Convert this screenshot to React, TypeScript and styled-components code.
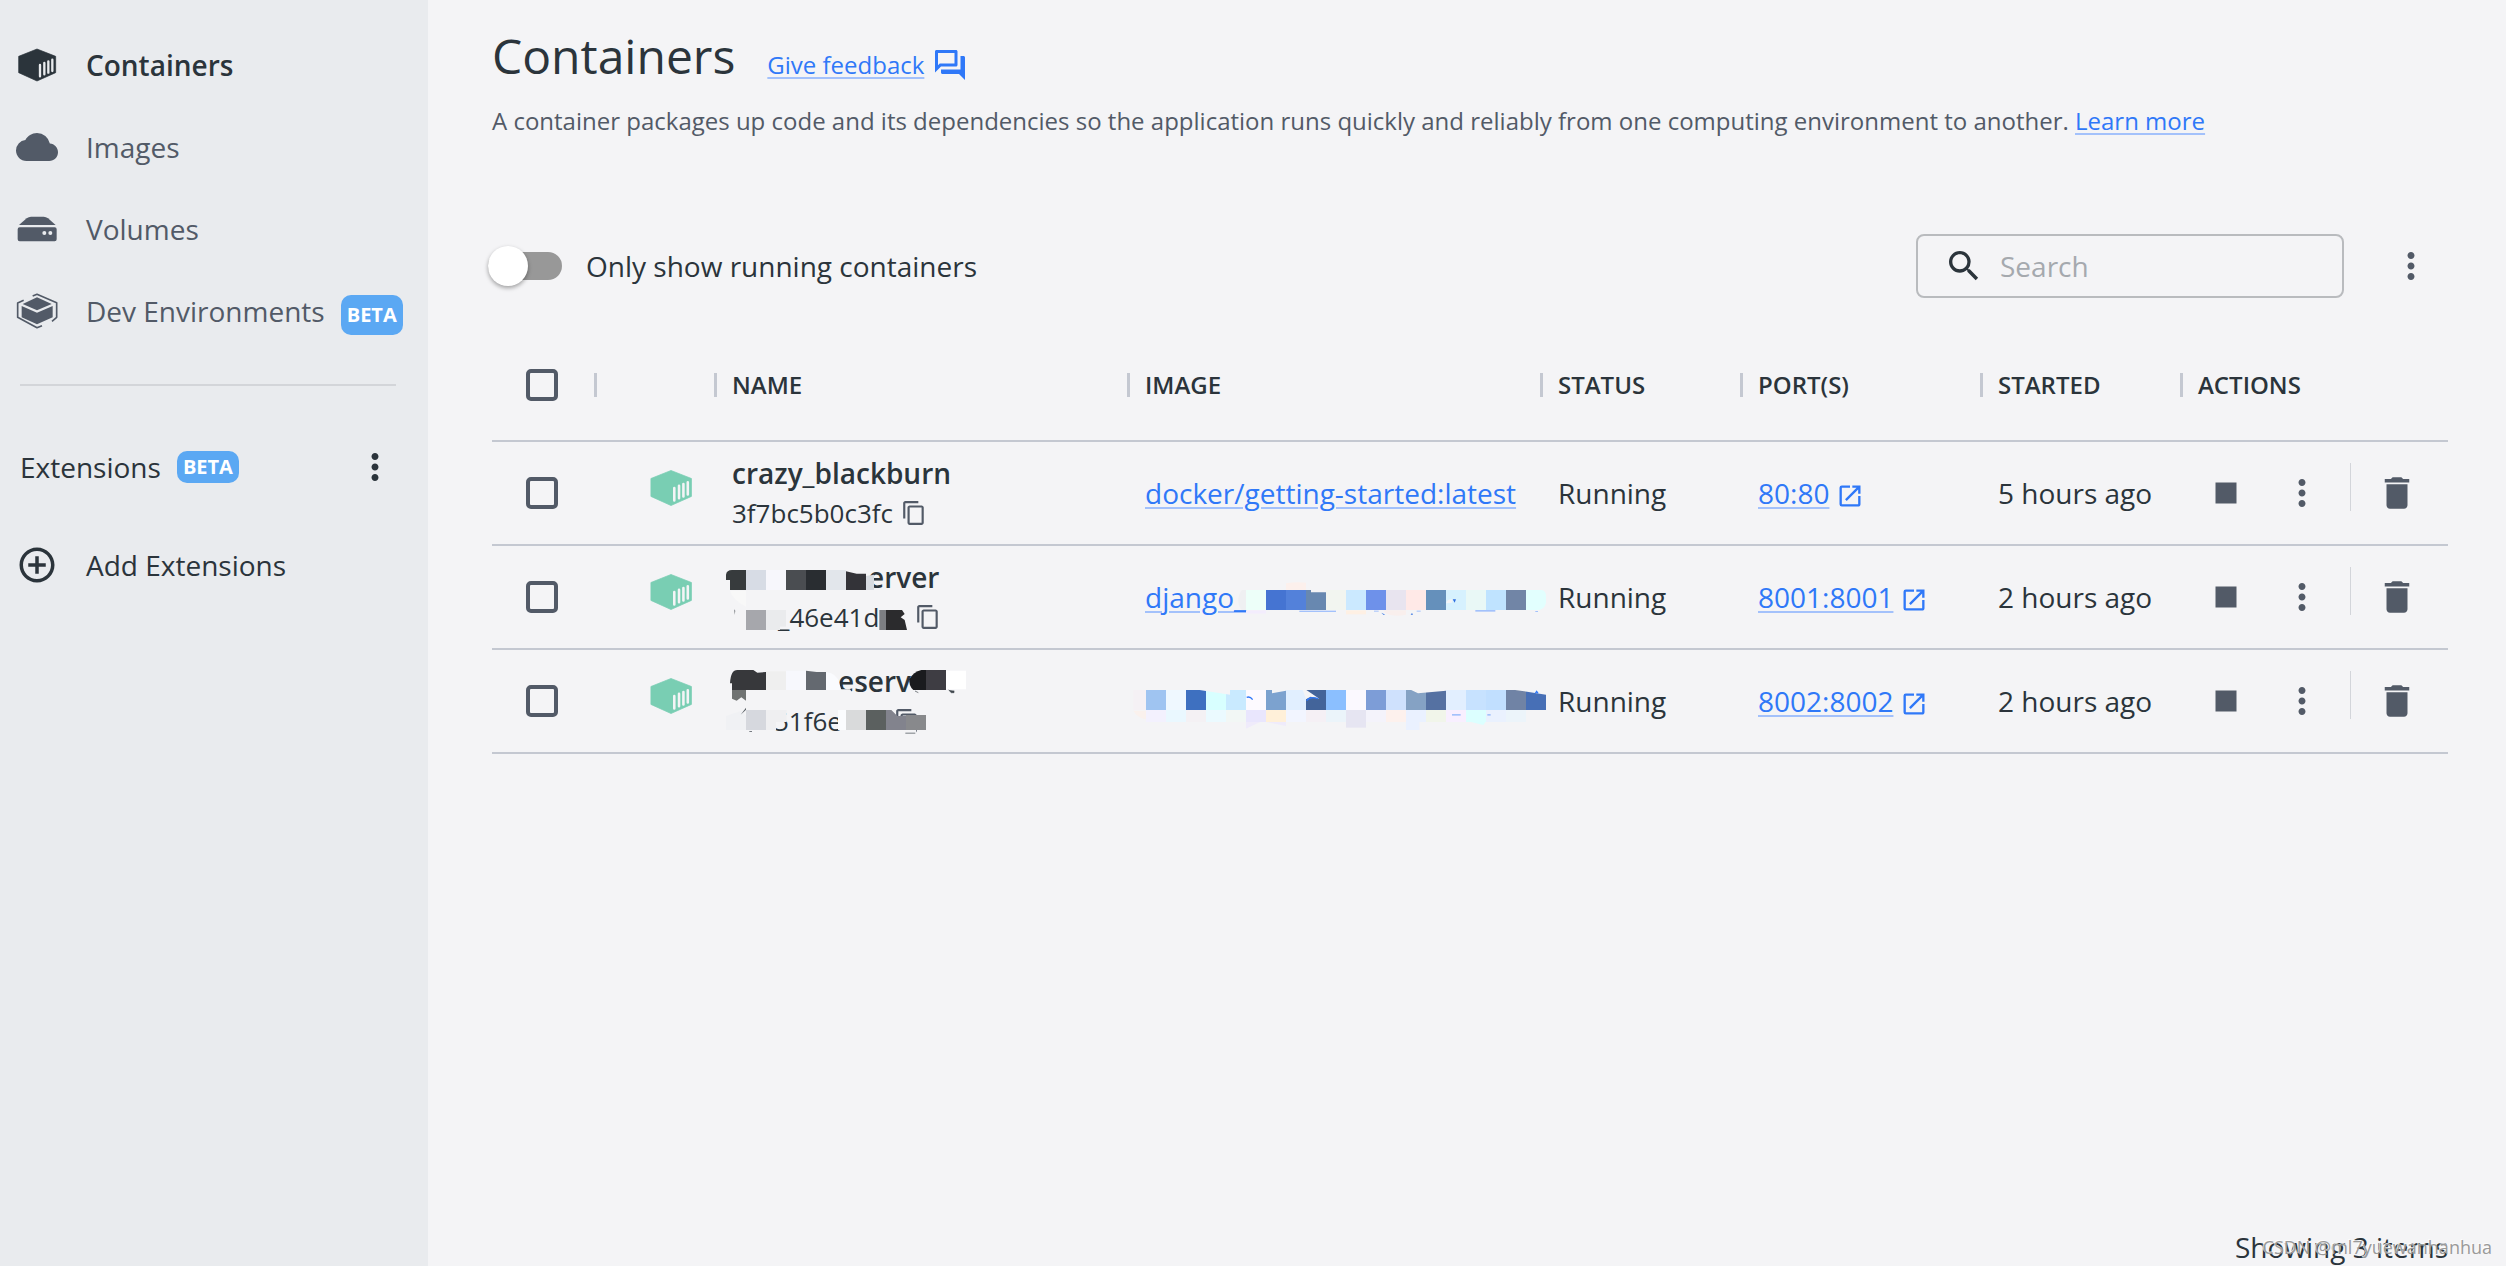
import React from "react";
import styled, { createGlobalStyle } from "styled-components";
import {
  MdAddCircleOutline,
  MdCloud,
  MdContentCopy,
  MdDelete,
  MdMoreVert,
  MdOpenInNew,
  MdOutlineForum,
  MdSearch,
  MdStop,
} from "react-icons/md";

const color = {
  page: "#f4f4f6",
  sidebar: "#e9ebee",
  text: "#2b343b",
  muted: "#525a67",
  link: "#2f78f8",
  underline: "#a3c1fb",
  line: "#c4c8d1",
  badge: "#5ba8f3",
  running: "#79ceb3",
};

const Global = createGlobalStyle`
  * { box-sizing: border-box; }
  body {
    margin: 0;
    background: ${color.page};
    color: ${color.text};
    font-family: "Open Sans", "Noto Sans", sans-serif;
    font-size: 28px;
    line-height: 38px;
  }
  svg { display: block; flex: none; }
  button, input { font: inherit; color: inherit; }
`;

const Shell = styled.div`
  display: grid;
  grid-template-columns: 428px minmax(0, 1fr);
  min-height: 100vh;
`;

const Sidebar = styled.aside`
  background: ${color.sidebar};
  padding: 24px 16px;
`;

const NavItem = styled.a<{ $active?: boolean; $strong?: boolean }>`
  display: flex;
  align-items: center;
  gap: 28px;
  height: 82px;
  text-decoration: none;
  white-space: nowrap;
  color: ${(p) => (p.$active || p.$strong ? color.text : color.muted)};
  font-weight: ${(p) => (p.$active ? 600 : 400)};
`;

const NavLabel = styled.span`
  display: flex;
  align-items: baseline;
  gap: 16px;
  height: 38px;
`;

const Badge = styled.span<{ $tall?: boolean }>`
  padding: 0 6px;
  border-radius: 10px;
  background: ${color.badge};
  color: #fff;
  font-size: 20px;
  font-weight: 700;
  line-height: ${(p) => (p.$tall ? 40 : 32)}px;
`;

const SideRule = styled.hr`
  height: 2px;
  margin: 32px 16px 60px 4px;
  border: 0;
  background: #d3d5d9;
`;

const ExtensionsRow = styled.div`
  display: flex;
  align-items: center;
  gap: 16px;
  margin: 0 16px 36px 4px;
`;

const IconButton = styled.button<{ $width?: number; $tone?: string }>`
  display: flex;
  align-items: center;
  justify-content: center;
  flex: none;
  width: ${(p) => p.$width ?? 42}px;
  height: 42px;
  padding: 0;
  border: 0;
  background: none;
  color: ${(p) => p.$tone ?? color.muted};
  cursor: pointer;
`;

const PushRight = styled.div`
  margin-left: auto;
`;

const Main = styled.main`
  display: flex;
  flex-direction: column;
  padding: 25px 58px 0 64px;
`;

const TitleRow = styled.header`
  display: flex;
  align-items: baseline;
  gap: 32px;
  margin-bottom: 16px;
`;

const Title = styled.h1`
  margin: 0;
  font-size: 48px;
  font-weight: 400;
  line-height: 62px;
`;

const Link = styled.a`
  color: ${color.link};
  text-decoration: underline;
  text-decoration-color: ${color.underline};
  text-decoration-thickness: 2px;
  text-underline-offset: 3px;
`;

const Feedback = styled.div`
  display: flex;
  align-items: center;
  gap: 8px;
  color: ${color.link};
  font-size: 24px;
  line-height: 36px;
`;

const Intro = styled.p`
  margin: 0 0 95px;
  color: ${color.muted};
  font-size: 24px;
  line-height: 36px;
`;

const Toolbar = styled.div`
  display: flex;
  align-items: center;
  gap: 38px;
  margin-bottom: 32px;
  padding-right: 8px;
`;

const SwitchLabel = styled.label`
  display: flex;
  align-items: center;
  gap: 24px;
  margin: 0 auto 0 -4px;
`;

const Switch = styled.input`
  appearance: none;
  position: relative;
  width: 74px;
  height: 28px;
  margin: 0;
  border-radius: 14px;
  background: #989898;
  &::before {
    content: "";
    position: absolute;
    left: 0;
    top: -6px;
    width: 40px;
    height: 40px;
    border-radius: 50%;
    background: #fff;
    box-shadow: 0 2px 4px rgba(0, 0, 0, 0.35);
  }
  &:checked { background: ${color.link}; }
  &:checked::before { left: 34px; }
`;

const SearchBox = styled.label`
  display: flex;
  align-items: center;
  gap: 16px;
  width: 428px;
  height: 64px;
  padding: 0 26px;
  border: 2px solid #b9bbbe;
  border-radius: 8px;
`;

const SearchInput = styled.input`
  flex: 1;
  min-width: 0;
  padding: 0;
  border: 0;
  outline: 0;
  background: none;
  &::placeholder { color: #a5a9ae; opacity: 1; }
`;

const Table = styled.table`
  width: 100%;
  table-layout: fixed;
  border-collapse: separate;
  border-spacing: 0;
`;

const Th = styled.th<{ $width?: number }>`
  width: ${(p) => (p.$width ? `${p.$width}px` : "auto")};
  height: 112px;
  padding: 0;
  border-bottom: 2px solid ${color.line};
  font-size: 24px;
  font-weight: 600;
  text-align: left;
`;

const HeadCell = styled.div<{ $last?: boolean }>`
  display: flex;
  align-items: center;
  height: 24px;
  margin-right: -1px;
  padding: 0 16px;
  border-right: ${(p) => (p.$last ? "0" : `3px solid ${color.line}`)};
`;

const Td = styled.td`
  position: relative;
  height: 104px;
  padding: 0 16px;
  border-bottom: 2px solid ${color.line};
  white-space: nowrap;
`;

const Checkbox = styled.input`
  appearance: none;
  display: block;
  flex: none;
  width: 32px;
  height: 32px;
  margin: 0 0 0 18px;
  border: 4px solid ${color.muted};
  border-radius: 5px;
  &:checked { background: ${color.link}; }
`;

const StateCell = styled.div`
  display: flex;
  justify-content: flex-end;
  height: 56px;
  padding-right: 6px;
`;

const Name = styled.div<{ $lead?: number }>`
  padding-left: ${(p) => p.$lead ?? 0}px;
  font-weight: 600;
`;

const Id = styled.div<{ $lead?: number }>`
  display: flex;
  align-items: center;
  gap: 8px;
  padding-top: 2px;
  padding-left: ${(p) => p.$lead ?? 0}px;
  font-size: 26px;
`;

const CopyButton = styled(IconButton)<{ $lead?: number }>`
  width: 26px;
  height: 26px;
  margin-left: ${(p) => p.$lead ?? 0}px;
`;

const Port = styled.div`
  display: flex;
  align-items: center;
  gap: 7px;
  color: ${color.link};
  svg { margin-top: 6px; }
`;

const Actions = styled.div`
  display: flex;
  align-items: center;
  gap: 20px;
  height: 60px;
`;

const ActionRule = styled.div`
  align-self: flex-start;
  width: 1px;
  height: 48px;
  background: #d3d5da;
`;

const Mosaic = styled.svg`
  position: absolute;
  left: 0;
  top: 0;
  overflow: visible;
  pointer-events: none;
`;

const Footer = styled.footer`
  margin-top: auto;
  text-align: right;
`;

const Watermark = styled.div`
  position: absolute;
  right: 14px;
  bottom: 4px;
  color: #9a9a9a;
  font-size: 18px;
  line-height: 30px;
  text-shadow: -1px -1px 0 rgba(255, 255, 255, 0.8);
`;

const Frame = styled.div`
  position: relative;
`;

function ContainerIcon({ size = 42, fill, gap }: { size?: number; fill: string; gap: string }) {
  return (
    <svg width={size} height={size} viewBox="46 71 126 126" aria-hidden="true">
      <path
        d="M109 86L165 108V157L109 182L54 157V108Z"
        fill={fill}
        stroke={fill}
        strokeWidth="2"
        strokeLinejoin="round"
      />
      <path d="M118 134V168M131 128V162M143 123V157M155 118V152" stroke={gap} strokeWidth="7" strokeLinecap="round" />
    </svg>
  );
}

function VolumeIcon() {
  return (
    <svg width="42" height="42" viewBox="46 562 126 126" fill="currentColor" aria-hidden="true">
      <path d="M55 613L78 593Q84 588 91 588H129Q136 588 142 593L165 613Z" />
      <path
        fillRule="evenodd"
        d="M57 620H162Q168 620 168 626V656Q168 662 162 662H57Q51 662 51 656V626Q51 620 57 620ZM125 637a6 6 0 1 0 12 0a6 6 0 1 0 -12 0ZM143 637a6 6 0 1 0 12 0a6 6 0 1 0 -12 0Z"
      />
    </svg>
  );
}

function DevIcon() {
  return (
    <svg width="42" height="42" viewBox="46 808 126 126" fill="currentColor" aria-hidden="true">
      <path d="M109 830L153 850L109 869L66 850Z" />
      <path d="M63 856L109 876L156 856V890L109 911L63 890Z" />
      <path
        d="M69 839L51 847V890L109 921L124 915M96 826L109 821L168 846V890L154 902"
        fill="none"
        stroke="currentColor"
        strokeWidth="5"
        strokeLinejoin="round"
      />
    </svg>
  );
}

type Block = [number, number, number, number, string];

const Blocks = ({ items }: { items: Block[] }) => (
  <>
    {items.map(([x, y, w, h, fill], i) => (
      <rect key={i} x={x} y={y} width={w} height={h} fill={fill} />
    ))}
  </>
);

const tiles = (x: number, y: number, h: number, fills: string[]): Block[] =>
  fills.map((fill, i) => [x + i * 60, y, 60, h, fill]);

const ServerMask = () => (
  <Mosaic width="413" height="102" viewBox="48 18 1239 306" aria-hidden="true">
    <path d="M78 120V104Q80 90 96 90H138V150H90V120Z" fill="#373b3d" />
    <Blocks items={tiles(138, 90, 60, ["#d7dce5", "#f7f7fc", "#4a4d51", "#292d31", "#e2e6eb"])} />
    <path d="M438 94L470 101H498V150H438Z" fill="#333338" />
    <path d="M498 108L522 104V150H498Z" fill="#d7dbe0" />
    <path d="M90 152H138V200Q98 180 90 152Z" fill="#f8f8f8" />
    <path d="M102 208L106 212L104 224Z" fill="#85898d" />
    <Blocks items={[[138, 210, 60, 60, "#a6a7ac"], [198, 210, 60, 50, "#eaebed"], [198, 250, 42, 20, "#eaebed"], [538, 210, 20, 60, "#7c7e82"]]} />
    <path d="M558 210H606L614 222L602 232L614 240L621 270H558Z" fill="#2b2b2d" />
  </Mosaic>
);

const SecondMask = () => (
  <Mosaic width="413" height="102" viewBox="48 330 1239 306" aria-hidden="true">
    <path d="M90 430Q92 390 112 390H160L172 398L198 396V450H96V430Z" fill="#37383b" />
    <path d="M96 450H138V482L124 472L110 482L96 476Z" fill="#707372" />
    <Blocks items={[[198, 394, 60, 56, "#efefef"], [258, 392, 60, 58, "#f7f8fd"]]} />
    <path d="M318 392L350 396H378V450H318Z" fill="#646970" />
    <path d="M378 396Q412 400 418 430L424 450H378Z" fill="#fafbfe" />
    <path d="M418 448H450L458 460H430Z" fill="#f4f4f6" />
    <path d="M678 390V450H640Q626 438 628 418Q640 396 664 390Z" fill="#1a1b1e" />
    <Blocks items={[[678, 390, 60, 60, "#3e3d43"], [738, 392, 60, 56, "#ffffff"]]} />
    <path d="M645 453L655 458M746 450L754 458H762V452" fill="#3f474d" stroke="#3f474d" strokeWidth="2" />
    <path d="M78 528L124 512L138 526V570H78Z" fill="#f0f1f4" />
    <path d="M122 524L138 503V509Z" fill="#555c62" />
    <Blocks items={[[138, 510, 60, 60, "#d6d8de"], [198, 510, 62, 36, "#efeff1"], [198, 546, 30, 24, "#efeff1"], [414, 510, 24, 60, "#fbfcfe"], [438, 510, 60, 60, "#d9dadb"], [498, 510, 60, 60, "#5b605f"]]} />
    <path d="M558 510H574L592 528H618V570H558Z" fill="#82838d" />
    <Blocks items={[[618, 525, 60, 45, "#88898c"], [588, 570, 60, 12, color.page], [148, 573, 8, 3, "#777c82"], [616, 578, 30, 3, "#777c82"]]} />
  </Mosaic>
);

const DjangoMask = () => (
  <Mosaic width="413" height="102" viewBox="27 -12 1239 306" aria-hidden="true">
    <path d="M378 120H366Q354 134 355 152Q356 172 366 180H378Z" fill="#eff0f2" />
    <path d="M498 100Q530 94 558 98V120H498Z" fill="#fcf0ec" />
    <Blocks
      items={[
        ...tiles(378, 120, 60, ["#edfff9", "#4574d2", "#5381da"]),
        ...tiles(618, 120, 60, ["#f2f5f0", "#cbe9ff", "#6e91ea", "#e8e4ef", "#ffe9e7", "#6590bb", "#d6f1fe", "#e9f8f6", "#bfe3ff", "#7185a6"]),
        [378, 181, 60, 10, "#f3edfd"],
        [342, 182, 36, 4, "#2f78f8"],
        [538, 182, 110, 4, "#a3c1fb"],
        [678, 181, 60, 12, "#fef0e4"],
        [762, 182, 14, 3, "#a3c1fb"],
        [890, 182, 12, 3, "#a3c1fb"],
        [1066, 180, 60, 5, "#a3c1fb"],
        [1246, 183, 8, 3, "#a3c1fb"],
      ]}
    />
    <path d="M558 120H573V127H618V180H558Z" fill="#6888b0" />
    <path d="M1218 120H1264Q1278 122 1278 138V158Q1274 180 1250 180H1218Z" fill="#e2fffe" />
    <path d="M790 181H858V194Q820 202 796 190Z" fill="#f9efed" />
    <path d="M978 160Q982 146 998 148L996 158Z" fill="#f4f4f6" />
    <path d="M998 148H1008L1004 158ZM784 188L796 194H790ZM872 194L876 189L879 194Z" fill="#2f6fe0" />
  </Mosaic>
);

const ImageMask = () => (
  <Mosaic width="413" height="102" viewBox="27 300 1239 306" aria-hidden="true">
    <Blocks
      items={[
        [40, 420, 38, 60, "#f5f1f5"],
        ...tiles(78, 420, 60, ["#9fc4f1", "#eff8ff", "#3e70c0", "#d8ffff", "#c9eaff", "#fdfaff", "#7ca2cf", "#e1efff", "#43649a", "#8bbfff", "#fbf9ff", "#7d9dd7", "#cfe1fd", "#85a2c4", "#5571a2", "#e2efff", "#c7e2ff", "#c1dfff", "#7083a5", "#476fb6"]),
        ...tiles(78, 480, 36, ["#f3f1fe", "#eaf8ff", "#f4f1f4", "#ebfaff", "#f2f7f5", "#e9e6fd", "#fff0d9", "#f2f5ff", "#f5f0f5", "#ebf4fa", "#e6e5f2", "#f4f3fb", "#fdf1ed", "#eaf1ff", "#f1f5ea", "#f8efff", "#dcffff", "#eaf1fe", "#ecf4fa"]),
        [678, 516, 60, 17, "#e6e5f2"],
        [858, 516, 40, 24, "#eaf1ff"],
        [996, 492, 26, 5, "#a3c1fb"],
        [1102, 492, 10, 5, "#a3c1fb"],
      ]}
    />
    <path d="M40 482H78V508Q50 502 40 482Z" fill="#faf1ed" />
    <path d="M378 516H420L378 536ZM438 516L498 528V516Z" fill="#efebfb" />
    <path d="M1038 512L1090 525L1098 514Z" fill="#dcffff" />
    <path d="M234 419L330 434V419ZM456 419V430L498 422V419ZM872 419L894 430L978 422V419ZM1180 419L1278 434V419Z" fill="#f4f4f6" />
    <path d="M548 419H558L598 446L572 440L558 448Z" fill="#f4f4f6" />
    <path d="M380 442Q390 438 398 449M560 452Q570 438 594 446M1246 430L1250 424L1254 430" fill="none" stroke="#2f78f8" strokeWidth="4" />
  </Mosaic>
);

interface RowData {
  key: string;
  name: React.ReactNode;
  image: React.ReactNode;
  port: string;
  started: string;
}

const rows: RowData[] = [
  {
    key: "crazy_blackburn",
    name: (
      <>
        <Name>crazy_blackburn</Name>
        <Id>
          3f7bc5b0c3fc
          <CopyButton aria-label="Copy id"><MdContentCopy size={26} /></CopyButton>
        </Id>
      </>
    ),
    image: <Link href="#image">docker/getting-started:latest</Link>,
    port: "80:80",
    started: "5 hours ago",
  },
  {
    key: "server",
    name: (
      <>
        <Name $lead={136}>erver</Name>
        <Id $lead={46}>
          _46e41d
          <CopyButton $lead={28} aria-label="Copy id"><MdContentCopy size={26} /></CopyButton>
        </Id>
        <ServerMask />
      </>
    ),
    image: (
      <>
        <Link href="#image">django_</Link>
        <DjangoMask />
      </>
    ),
    port: "8001:8001",
    started: "2 hours ago",
  },
  {
    key: "eserver",
    name: (
      <>
        <Name $lead={106}>eserv</Name>
        <Id $lead={42}>
          51f6e
          <CopyButton $lead={44} aria-label="Copy id"><MdContentCopy size={26} /></CopyButton>
        </Id>
        <SecondMask />
      </>
    ),
    image: <ImageMask />,
    port: "8002:8002",
    started: "2 hours ago",
  },
];

const headings: { label: string; width?: number }[] = [
  { label: "", width: 120 },
  { label: "NAME" },
  { label: "IMAGE" },
  { label: "STATUS", width: 200 },
  { label: "PORT(S)", width: 240 },
  { label: "STARTED", width: 200 },
  { label: "ACTIONS", width: 266 },
];

export default function App() {
  return (
    <Frame>
      <Global />
      <Shell>
        <Sidebar>
          <nav>
            <NavItem href="#containers" $active>
              <ContainerIcon fill={color.text} gap={color.sidebar} />
              Containers
            </NavItem>
            <NavItem href="#images">
              <MdCloud size={42} />
              Images
            </NavItem>
            <NavItem href="#volumes">
              <VolumeIcon />
              Volumes
            </NavItem>
            <NavItem href="#dev">
              <DevIcon />
              <NavLabel>
                Dev Environments <Badge $tall>BETA</Badge>
              </NavLabel>
            </NavItem>
          </nav>
          <SideRule />
          <ExtensionsRow>
            Extensions <Badge>BETA</Badge>
            <PushRight>
              <IconButton $tone={color.text} aria-label="Extension options"><MdMoreVert size={42} /></IconButton>
            </PushRight>
          </ExtensionsRow>
          <NavItem href="#add" $strong>
            <MdAddCircleOutline size={42} />
            Add Extensions
          </NavItem>
        </Sidebar>

        <Main>
          <TitleRow>
            <Title>Containers</Title>
            <Feedback>
              <Link href="#feedback">Give feedback</Link>
              <MdOutlineForum size={36} />
            </Feedback>
          </TitleRow>
          <Intro>
            A container packages up code and its dependencies so the application runs quickly and reliably from one
            computing environment to another. <Link href="#learn">Learn more</Link>
          </Intro>

          <Toolbar>
            <SwitchLabel>
              <Switch type="checkbox" />
              Only show running containers
            </SwitchLabel>
            <SearchBox>
              <MdSearch size={40} />
              <SearchInput type="text" placeholder="Search" aria-label="Search" />
            </SearchBox>
            <IconButton $width={58} aria-label="Table options"><MdMoreVert size={42} /></IconButton>
          </Toolbar>

          <Table>
            <thead>
              <tr>
                <Th $width={104}>
                  <HeadCell>
                    <Checkbox type="checkbox" aria-label="Select all" />
                  </HeadCell>
                </Th>
                {headings.map((h, i) => (
                  <Th key={i} $width={h.width}>
                    <HeadCell $last={i === headings.length - 1}>{h.label}</HeadCell>
                  </Th>
                ))}
              </tr>
            </thead>
            <tbody>
              {rows.map((row) => (
                <tr key={row.key}>
                  <Td><Checkbox type="checkbox" aria-label={`Select ${row.key}`} /></Td>
                  <Td>
                    <StateCell>
                      <ContainerIcon size={46} fill={color.running} gap={color.page} />
                    </StateCell>
                  </Td>
                  <Td>{row.name}</Td>
                  <Td>{row.image}</Td>
                  <Td>Running</Td>
                  <Td>
                    <Port>
                      <Link href="#port">{row.port}</Link>
                      <MdOpenInNew size={28} />
                    </Port>
                  </Td>
                  <Td>{row.started}</Td>
                  <Td>
                    <Actions>
                      <IconButton $width={56} aria-label="Stop"><MdStop size={42} /></IconButton>
                      <IconButton $width={56} aria-label="More actions"><MdMoreVert size={42} /></IconButton>
                      <ActionRule />
                      <IconButton $width={52} aria-label="Delete"><MdDelete size={42} /></IconButton>
                    </Actions>
                  </Td>
                </tr>
              ))}
            </tbody>
          </Table>

          <Footer>Showing 3 items</Footer>
        </Main>
      </Shell>
      <Watermark>CSDN @ml7yuewanhanhua</Watermark>
    </Frame>
  );
}
